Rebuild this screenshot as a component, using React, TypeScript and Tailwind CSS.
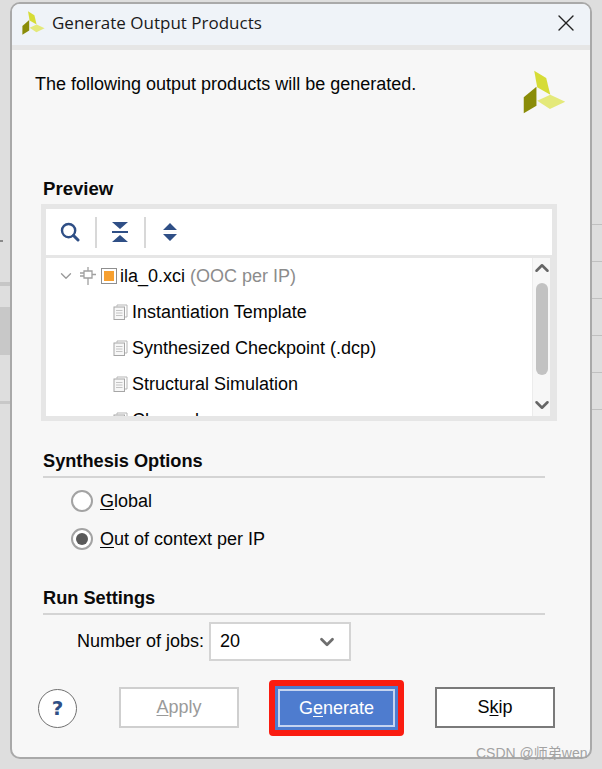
import React from "react";
import { X, ChevronDown, ChevronUp } from "lucide-react";

const XilinxLogo = ({ className }: { className: string }) => (
  <svg viewBox="0 0 115 132" preserveAspectRatio="none" className={className}>
    <polygon points="2,82 36,50 36,107 2,130" fill="#8a8c08" />
    <polygon points="30,2 62,24 73,74 38,52" fill="#d6dc36" />
    <polygon points="38,92 73,74 113,95 72,117" fill="#e4e97a" />
  </svg>
);

const DocIcon = () => (
  <svg viewBox="0 0 15 16" className="w-[15px] h-[16px] shrink-0">
    <path d="M4 2.5V1h10v12h-2" fill="none" stroke="#b5b5b5" />
    <rect x="1" y="3" width="10.5" height="12.5" fill="#f7f7f7" stroke="#a6a6a6" />
    <path d="M3 6.5h6.5M3 9h6.5M3 11.5h6.5" stroke="#c4c4c4" />
  </svg>
);

const TreeRow = ({ label }: { label: string }) => (
  <div className="h-[36px] flex items-center pl-[67px] gap-[4px] shrink-0">
    <DocIcon />
    <span>{label}</span>
  </div>
);

const Section = ({ title }: { title: string }) => (
  <div className="border-b-2 border-[#d4d4d4] mr-[14px] h-[29px] font-bold text-[#0a0a0a] text-[18.2px] leading-[24px]">
    {title}
  </div>
);

const Radio = ({ checked, children }: { checked?: boolean; children: React.ReactNode }) => (
  <div className="h-[38px] flex items-center pl-[28px] gap-[7px]">
    <div className="w-[22px] h-[22px] rounded-full bg-white border-2 border-[#a3a3a3] flex items-center justify-center">
      {checked && <div className="w-[12px] h-[12px] rounded-full bg-[#595959]" />}
    </div>
    <span>{children}</span>
  </div>
);

export default function App() {
  return (
    <div className="w-[602px] h-[769px] relative overflow-hidden bg-[#dedede] pt-[2px] pl-[10px] font-['Liberation_Sans',Arial,sans-serif] text-[18px] text-[#050505]">
      {/* desktop behind the dialog */}
      <div className="absolute right-0 top-0 w-[10px] h-full flex flex-col pt-[224px] gap-[36px]">
        <div className="h-px bg-[#c0c0c0]" />
        <div className="h-px bg-[#c0c0c0]" />
        <div className="h-px bg-[#c0c0c0]" />
        <div className="h-px bg-[#c0c0c0]" />
        <div className="h-px bg-[#c0c0c0]" />
        <div className="h-px bg-[#c0c0c0]" />
      </div>
      <div className="absolute left-0 top-[282px] w-[10px] h-[4px] bg-[#c6c6c6]" />
      <div className="absolute left-0 top-[307px] w-[10px] h-[48px] bg-[#c8c8c8]" />
      <div className="absolute left-0 top-[401px] w-[10px] h-[3px] bg-[#c8c8c8]" />
      <div className="absolute left-0 top-[240px] w-[3px] h-[2px] bg-[#8a8a8a]" />

      <div className="relative w-[582px] h-[757px] rounded-[10px] overflow-hidden bg-[#f7f7f7] border-2 border-[#a9a9a9]">
        {/* title bar */}
        <div className="h-[41px] bg-[#eff3f8] flex items-center pl-[10px] pr-[10px] pb-[4px] font-['Open_Sans',sans-serif] text-[17px] text-[#1a1a1a]">
          <XilinxLogo className="w-[23px] h-[24px] mr-[7px]" />
          <span>Generate Output Products</span>
          <X className="ml-auto w-[28px] h-[28px] text-[#222]" strokeWidth={1.2} />
        </div>
        <div className="h-[5px] bg-[#e6e6e6]" />

        <div className="px-[31px]">
          {/* header message */}
          <div className="flex justify-between h-[127px] -ml-[8px]">
            <div className="pt-[24px] leading-[20px]">The following output products will be generated.</div>
            <XilinxLogo className="w-[43px] h-[44px] mt-[20px] -mr-[7px]" />
          </div>

          {/* preview */}
          <div className="font-bold text-[18.6px] leading-[24px] h-[27px] text-[#0a0a0a]">Preview</div>
          <div className="-ml-[2px] w-[516px] h-[217px] border-[5px] border-[#e6e6e6] bg-white flex flex-col">
            <div className="h-[46px] flex items-center pl-[14px] shrink-0">
              <svg viewBox="0 0 20 20" className="w-[20px] h-[20px]">
                <circle cx="8.6" cy="8.6" r="6.6" fill="none" stroke="#2f4f86" strokeWidth="2.4" />
                <path d="M13.5 13.5L18 18" stroke="#2f4f86" strokeWidth="3" strokeLinecap="round" />
              </svg>
              <div className="w-[2px] h-[31px] bg-[#d8d8d8] ml-[15px] mr-[15px]" />
              <svg viewBox="0 0 16 20" className="w-[16px] h-[20px]">
                <path d="M0 0h16L8 7zM0 20h16L8 13z" fill="#2f4f86" />
                <path d="M0 10h16" stroke="#2f4f86" strokeWidth="2" />
              </svg>
              <div className="w-[2px] h-[31px] bg-[#d8d8d8] ml-[16px] mr-[16px]" />
              <svg viewBox="0 0 16 20" className="w-[16px] h-[20px]">
                <path d="M8 1l7 7H1zM8 19l-7-7h14z" fill="#2f4f86" />
                <path d="M1 10h14" stroke="#f7f7f7" strokeWidth="1" />
              </svg>
            </div>
            <div className="h-[3px] bg-[#e6e6e6] shrink-0" />
            <div className="flex h-[158px]">
              <div className="flex-1 overflow-hidden flex flex-col">
                <div className="h-[36px] flex items-center pl-[11px] shrink-0">
                  <ChevronDown className="w-[18px] h-[18px] text-[#9a9a9a]" strokeWidth={1.8} />
                  <svg viewBox="0 0 16 18" className="w-[16px] h-[18px] ml-[5px]">
                    <path d="M4 4h8v7H4zM8 0v4M8 11v7M0 6h4M0 9h4M12 7.5h4" fill="none" stroke="#a0a0a0" strokeWidth="1.3" />
                  </svg>
                  <div className="w-[16px] h-[16px] ml-[5px] border border-[#8f8f8f] bg-white flex items-center justify-center">
                    <div className="w-[10px] h-[10px] bg-[#f7a030]" />
                  </div>
                  <span className="ml-[3px]">ila_0.xci</span>
                  <span className="ml-[5px] text-[#8c8c8c]">(OOC per IP)</span>
                </div>
                <TreeRow label="Instantiation Template" />
                <TreeRow label="Synthesized Checkpoint (.dcp)" />
                <TreeRow label="Structural Simulation" />
                <TreeRow label="Changelog" />
              </div>
              {/* scrollbar */}
              <div className="w-[20px] border-l border-[#ececec] bg-[#f7f7f7] flex flex-col items-center border-r-2 border-r-[#e6e6e6] shrink-0">
                <ChevronUp className="w-[22px] h-[22px] -mt-[1px] text-[#666] shrink-0" strokeWidth={2.8} />
                <div className="w-[12px] h-[92px] mt-[4px] rounded-full bg-[#c2c2c2]" />
                <ChevronDown className="w-[22px] h-[22px] mt-auto text-[#666] shrink-0" strokeWidth={2.8} />
              </div>
            </div>
          </div>

          {/* synthesis options */}
          <div className="mt-[28px]">
            <Section title="Synthesis Options" />
            <div className="mt-[4px]">
              <Radio>
                <u className="underline-offset-2">G</u>lobal
              </Radio>
              <Radio checked>
                <u className="underline-offset-2">O</u>ut of context per IP
              </Radio>
            </div>
          </div>

          {/* run settings */}
          <div className="mt-[28px]">
            <Section title="Run Settings" />
            <div className="flex items-center mt-[7px] pl-[34px] gap-[5px]">
              <span>Number of jobs:</span>
              <div className="w-[142px] h-[39px] bg-white border-2 border-[#d4d4d4] flex items-center justify-between pl-[9px] pr-[11px]">
                <span>20</span>
                <ChevronDown className="w-[22px] h-[22px] text-[#6e6e6e]" strokeWidth={3} />
              </div>
            </div>
          </div>
        </div>

        {/* footer */}
        <div className="flex items-center h-[56px] mt-[19px] pl-[26px]">
          <div className="w-[39px] h-[39px] rounded-full border border-[#707070] bg-white flex items-center justify-center font-bold text-[#2f4f86] text-[20px] font-['DejaVu_Sans',sans-serif]">
            ?
          </div>
          <div className="w-[120px] h-[41px] ml-[42px] mb-[2px] bg-white border-2 border-[#cfcfcf] flex items-center justify-center text-[#9a9a9a]">
            <span>
              <u className="underline-offset-2">A</u>pply
            </span>
          </div>
          <div className="w-[135px] h-[56px] ml-[30px] rounded-[4px] border-[6px] border-[#fa1c10] bg-[#4e7ccf] p-[3px]">
            <div className="w-full h-full border-2 border-[#c5d4f0] flex items-center justify-center text-white">
              <span>
                G<u className="underline-offset-2">e</u>nerate
              </span>
            </div>
          </div>
          <div className="w-[120px] h-[41px] ml-[31px] mb-[2px] bg-white border-2 border-[#7a7a7a] flex items-center justify-center">
            <span>
              S<u className="underline-offset-2">k</u>ip
            </span>
          </div>
        </div>
      </div>

      <div className="absolute left-[476px] top-[744px] text-[14px] leading-[18px] text-[#a3a3a3] font-['Liberation_Sans','Noto_Sans_CJK_SC',sans-serif]">
        CSDN @师弟wen
      </div>
    </div>
  );
}
